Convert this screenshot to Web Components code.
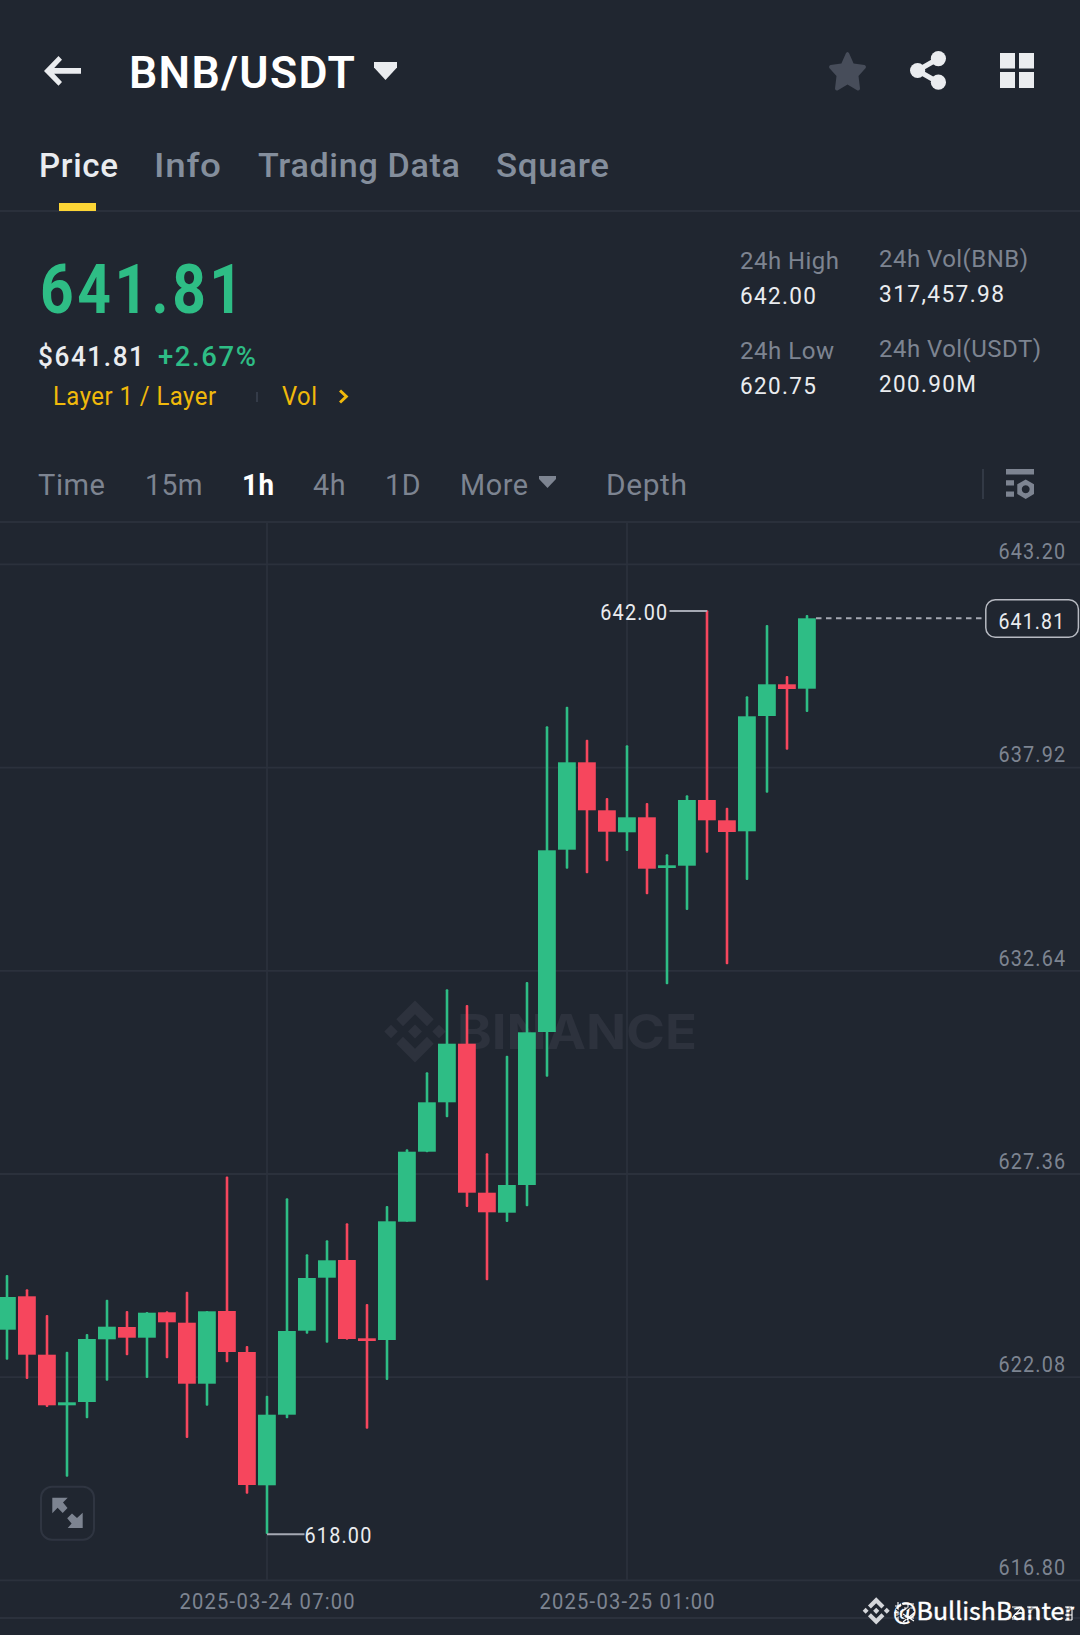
<!DOCTYPE html>
<html lang="en">
<head>
<meta charset="utf-8">
<title>BNB/USDT</title>
<style>
	body {
		margin: 0;
		background: #202630;
		font-family: Roboto, "Liberation Sans", sans-serif;
		overflow: hidden;
	}
</style>
</head>
<body>
<trade-page></trade-page>
<script>
// Text squeezed or stretched to a given width
class FitText extends HTMLElement {
	constructor() {
		super();
		this.attachShadow({ mode: 'open' });
		this.shadowRoot.innerHTML = `
			<style>
			:host {
				display: block;
				flex: none;
				white-space: nowrap;
			}

			span {
				display: inline-block;
				transform-origin: 0 50%;
			}
			</style>
			<span><slot></slot></span>
			`;
	}

	connectedCallback() {
		const width = Number(this.getAttribute('w'));
		const span = this.shadowRoot.querySelector('span');
		this.style.width = width + 'px';
		const natural = span.getBoundingClientRect().width;
		// the last letter's spacing hangs out of the box
		const spacing = parseFloat(getComputedStyle(this).letterSpacing) || 0;
		if (natural > 0) {
			span.style.transform = `scaleX(${width / (natural - spacing)})`;
		}
	}
}

class PairHeader extends HTMLElement {
	constructor() {
		super();
		this.attachShadow({ mode: 'open' });
		this.shadowRoot.innerHTML = `
			<style>
			:host {
				display: flex;
				align-items: center;
				height: 142px;
				padding: 0 46px 0 44px;
				box-sizing: border-box;
				color: #eaecef;
			}

			svg {
				display: block;
				flex: none;
				fill: currentColor;
			}

			fit-text {
				margin: 3px 19px 0 48px;
				font-size: 44px;
				font-weight: 600;
				line-height: 50px;
				letter-spacing: 0.03em;
				color: #fff;
			}

			.actions {
				display: flex;
				align-items: center;
				margin-left: auto;
			}

			.star {
				color: #474d5a;
				margin-right: 44px;
			}

			.share {
				margin: -1px 54px 0 0;
			}

			.apps {
				margin-top: -1px;
			}
			</style>
			<svg width="37" height="30" viewBox="0 0 37 30"><path d="M14.5 0l3.5 3.8L10.2 12H37v5.8H10.2L18 26l-3.5 3.8L0 15z"/></svg>
			<fit-text w="226">BNB/USDT</fit-text>
			<svg width="23" height="18" viewBox="0 0 23 18"><path d="M0 0h23v5.5L11.5 18 0 5.5z"/></svg>
			<div class="actions">
				<svg class="star" width="37" height="39" viewBox="0 0 37 39"><path d="M18.5 0Q19.6 0 20.2 1.5L24.6 11.5 35.5 13Q37.5 13.7 36.7 16L29.5 24 31 36.5Q30.8 39 28.5 38.4L18.5 32.5 8.5 38.4Q6.2 39 6 36.5L7.5 24 .3 16Q-.5 13.7 1.5 13L12.4 11.5 16.8 1.5Q17.4 0 18.5 0z"/></svg>
				<svg class="share" width="36" height="39" viewBox="0 0 36 39"><path d="M28.5 7.5L7.5 19.5l21 12" fill="none" stroke="currentColor" stroke-width="5"/><circle cx="7.6" cy="19.5" r="7.6"/><circle cx="28.4" cy="7.6" r="7.6"/><circle cx="28.4" cy="31.2" r="7.6"/></svg>
				<svg class="apps" width="34" height="35" viewBox="0 0 34 35"><path d="M0 0h15v15.6H0zM19 0h15v15.6H19zM0 19h15v16H0zM19 19h15v16H19z"/></svg>
			</div>
			`;
	}
}

class PageTabs extends HTMLElement {
	constructor() {
		super();
		this.attachShadow({ mode: 'open' });
		this.shadowRoot.innerHTML = `
			<style>
			:host {
				display: flex;
				gap: 36.5px;
				height: 70px;
				padding-left: 38.5px;
				box-sizing: border-box;
				border-bottom: 2px solid #2a303b;
				font-size: 32.3px;
				font-weight: 500;
				line-height: 49px;
				letter-spacing: 0.02em;
				color: #848e9c;
			}

			.active {
				position: relative;
				color: #eaecef;
			}

			.active::after {
				content: '';
				position: absolute;
				left: 20.5px;
				top: 61px;
				width: 37px;
				height: 8px;
				background: #fcd535;
			}
			</style>
			<fit-text class="active" w="79">Price</fit-text>
			<fit-text w="67">Info</fit-text>
			<fit-text w="202">Trading Data</fit-text>
			<fit-text w="113">Square</fit-text>
			`;
	}
}

class StatItem extends HTMLElement {
	constructor() {
		super();
		this.attachShadow({ mode: 'open' });
		this.shadowRoot.innerHTML = `
			<style>
			:host {
				display: block;
				font-size: 24.5px;
				line-height: 34.4px;
				letter-spacing: 0.06em;
				color: #eaecef;
			}

			::slotted([slot="label"]) {
				letter-spacing: 0.02em;
				margin: -1px 0 1px;
				color: #7d8491;
			}
			</style>
			<slot name="label"></slot>
			<slot></slot>
			`;
	}
}

class PriceSummary extends HTMLElement {
	constructor() {
		super();
		this.attachShadow({ mode: 'open' });
		this.shadowRoot.innerHTML = `
			<style>
			:host {
				display: flex;
				height: 238px;
				padding-left: 38px;
				box-sizing: border-box;
			}

			.left {
				width: 702px;
				padding-top: 38px;
			}

			.price {
				margin-left: 1.5px;
				font-size: 69px;
				font-weight: 700;
				line-height: 80px;
				letter-spacing: 0.06em;
				color: #2ebd85;
			}

			.change {
				display: flex;
				gap: 14px;
				font-size: 28.3px;
				font-weight: 500;
				line-height: 54px;
				letter-spacing: 0.06em;
				color: #eaecef;
			}

			.up {
				color: #2ebd85;
			}

			.tags {
				display: flex;
				align-items: center;
				padding-left: 15px;
				font-size: 25px;
				line-height: 25px;
				letter-spacing: 0.02em;
				color: #f0b90b;
			}

			.bar {
				width: 2px;
				height: 10px;
				margin: 0 24px 0 40px;
				background: #343b48;
			}

			.tags svg {
				margin-left: 22px;
			}

			.col {
				display: flex;
				flex-direction: column;
				gap: 21px;
				width: 139px;
				padding-top: 33px;
			}

			.col + .col {
				padding-top: 31px;
			}
			</style>
			<div class="left">
				<fit-text class="price" w="203">641.81</fit-text>
				<div class="change">
					<fit-text w="106">$641.81</fit-text>
					<fit-text class="up" w="98">+2.67%</fit-text>
				</div>
				<div class="tags">
					<fit-text w="163">Layer 1 / Layer</fit-text>
					<div class="bar"></div>
					<fit-text w="35">Vol</fit-text>
					<svg width="10" height="15" viewBox="0 0 10 15" fill="none" stroke="currentColor" stroke-width="3"><path d="M1 1.5l6.3 6L1 13.5"/></svg>
				</div>
			</div>
			<div class="col">
				<stat-item><fit-text slot="label" w="99">24h High</fit-text><fit-text w="76">642.00</fit-text></stat-item>
				<stat-item><fit-text slot="label" w="94">24h Low</fit-text><fit-text w="76">620.75</fit-text></stat-item>
			</div>
			<div class="col">
				<stat-item><fit-text slot="label" w="149">24h Vol(BNB)</fit-text><fit-text w="125">317,457.98</fit-text></stat-item>
				<stat-item><fit-text slot="label" w="162">24h Vol(USDT)</fit-text><fit-text w="97">200.90M</fit-text></stat-item>
			</div>
			`;
	}
}

class IntervalBar extends HTMLElement {
	constructor() {
		super();
		this.attachShadow({ mode: 'open' });
		this.shadowRoot.innerHTML = `
			<style>
			:host {
				display: flex;
				align-items: center;
				height: 73px;
				padding: 0 46px 0 38px;
				box-sizing: border-box;
				border-bottom: 2px solid #2a303b;
				font-size: 29px;
				line-height: 71px;
				letter-spacing: 0.02em;
				color: #7d8491;
			}

			.active {
				font-weight: 700;
				color: #fff;
			}

			fit-text {
				margin: 0 39.5px 0 0;
			}

			.more {
				margin-right: 11px;
			}

			.caret {
				margin: -7px 50px 0 0;
			}

			.bar {
				width: 2px;
				height: 30px;
				margin: -4px 22px 0 auto;
				background: #323945;
			}

			.settings {
				margin-top: -4px;
			}
			</style>
			<fit-text w="67">Time</fit-text>
			<fit-text w="57.5">15m</fit-text>
			<fit-text class="active" w="32">1h</fit-text>
			<fit-text w="32.5">4h</fit-text>
			<fit-text w="35.5">1D</fit-text>
			<fit-text class="more" w="68">More</fit-text>
			<svg class="caret" width="17" height="12" viewBox="0 0 17 12"><path d="M0 0h17v3L8.5 12 0 3z" fill="#7d8491"/></svg>
			<fit-text w="81">Depth</fit-text>
			<div class="bar"></div>
			<svg class="settings" width="28" height="30" viewBox="0 0 28 30" fill="#7d8491">
				<path d="M0 0h28v5.5H0zM0 11.3h8v5.2H0zM0 22.6h8v5.2H0z"/>
				<path fill-rule="evenodd" d="M19.7 10.4l8.3 4.9v9.8l-8.3 4.9-8.4-4.9v-9.8zM19.7 16.2a4 4 0 1 0 .01 0z"/>
			</svg>
			`;
	}
}

const GREEN = '#2ebd85';
const RED = '#f6465d';

// colour, high, body top, body bottom, low (y on the canvas)
const CANDLES = [
	['g', 1275, 1297, 1329.7, 1359.7],
	['r', 1289.3, 1296.3, 1354.7, 1379],
	['r', 1315, 1354.7, 1405.3, 1407],
	['g', 1351.7, 1402.3, 1405.3, 1476.7],
	['g', 1334, 1339, 1402, 1418.3],
	['g', 1299.7, 1326.7, 1339.3, 1380.7],
	['r', 1311, 1327, 1337.7, 1355.3],
	['g', 1312, 1312.7, 1337.7, 1378],
	['r', 1311.3, 1312.3, 1322.3, 1358.3],
	['r', 1291.7, 1322.7, 1383.7, 1438],
	['g', 1311, 1311.3, 1383.7, 1405.7],
	['r', 1176.5, 1311, 1352, 1362.3],
	['r', 1346, 1352, 1485, 1493.7],
	['g', 1395.7, 1414.7, 1485.3, 1534],
	['g', 1198.3, 1331, 1414.7, 1418.3],
	['g', 1254.3, 1278, 1330.7, 1333.7],
	['g', 1240.3, 1260.3, 1277.7, 1342.7],
	['r', 1223.3, 1260, 1339, 1339.7],
	['r', 1304, 1338.3, 1341, 1428.7],
	['g', 1206, 1221.3, 1340, 1380],
	['g', 1149.3, 1151.7, 1221.7, 1221.7],
	['g', 1072.3, 1102.3, 1151.7, 1152.3],
	['g', 989.3, 1043.7, 1102.3, 1117.3],
	['r', 1005, 1043.7, 1192.7, 1207],
	['r', 1153.3, 1192.7, 1212.3, 1280.3],
	['g', 1055.7, 1185, 1212.7, 1222],
	['g', 982, 1032.3, 1185, 1206.3],
	['g', 726.3, 850.3, 1032, 1076.7],
	['g', 706.7, 762.3, 849.7, 868.7],
	['r', 739.7, 762.3, 810.3, 873.3],
	['r', 798, 810.3, 831.7, 861.3],
	['g', 745.3, 817.3, 832.3, 851],
	['r', 803, 817.3, 868.7, 894.3],
	['g', 854.3, 865.3, 868, 984.3],
	['g', 795.3, 800, 865.7, 910],
	['r', 610.3, 800, 820.3, 852.7],
	['r', 807.7, 820.3, 832, 964.3],
	['g', 696.3, 716.3, 831.3, 880],
	['g', 625, 684.3, 716, 792.7],
	['r', 676, 684.3, 689, 749.7],
	['g', 615, 618.3, 688.7, 712],
];

const LEVELS = ['643.20', '637.92', '632.64', '627.36', '622.08', '616.80'];

class CandleChart extends HTMLElement {
	constructor() {
		super();
		this.attachShadow({ mode: 'open' });

		const candles = CANDLES.map(([c, high, top, bottom, low], i) => {
			const x = 7 + i * 20;
			const fill = c === 'g' ? GREEN : RED;
			return `<g fill="${fill}"><rect x="${x - 1.3}" y="${high}" width="2.6" height="${low - high}" rx="1"/><rect x="${x - 9}" y="${top}" width="17.8" height="${bottom - top}"/></g>`;
		}).join('');

		const rows = LEVELS.map((price, i) => {
			const y = 564.4 + i * 203.2;
			return `<path class="grid" d="M0 ${y}H1080"/><text class="axis" x="998.4" y="${y - 5.3}" textLength="68">${price}</text>`;
		}).join('');

		this.shadowRoot.innerHTML = `
			<style>
			:host {
				display: block;
				height: 1112px;
			}

			svg {
				display: block;
			}

			.grid {
				stroke: #2b313c;
				stroke-width: 1.8;
			}

			text {
				font-size: 22.8px;
				letter-spacing: 0.06em;
				fill: #eaecef;
			}

			text.axis {
				fill: #7d8491;
			}

			text.logo {
				font: 700 48px Inter, sans-serif;
				letter-spacing: 0;
				fill: #2d323d;
			}

			text.user {
				font: 400 24px "Noto Sans CJK SC", "Noto Sans", sans-serif;
				letter-spacing: 0;
				fill: #fff;
				stroke: #fff;
				stroke-width: 0.4;
			}

			.lead {
				stroke: #a5a9b3;
				stroke-width: 1.9;
			}

			.noise {
				fill: none;
				stroke: #fff;
				stroke-width: 1.1;
			}

			.noise.dark {
				stroke: #202630;
			}
			</style>
			<svg width="1080" height="1112" viewBox="0 523 1080 1112">
				<defs>
					<g id="mark">
						<path d="M0-31L18.7-12.3 12-5.3 0-17.3-12-5.3-18.7-12.3zM0 31L18.7 12.3 12 5.3 0 17.3-12 5.3-18.7 12.3z"/>
						<path d="M0-7l7 7-7 7-7-7zM-24-6.8L-17.3 0-24 6.8-30.7 0zM24-6.8L30.7 0 24 6.8 17.3 0z"/>
					</g>
				</defs>
				<path class="grid" d="M267 523V1580M627 523V1580M0 1618H1080"/>
				${rows}
				<use href="#mark" transform="translate(415 1031.5)" fill="#2d323d"/>
				<text class="logo" x="457" y="1048.7" textLength="240">BINANCE</text>
				${candles}
				<path class="lead" d="M669.5 611H707M267 1534.3H304.5"/>
				<text x="600.3" y="619.5" textLength="68">642.00</text>
				<text x="304.5" y="1543.2" textLength="68">618.00</text>
				<path class="lead" d="M816 618.3H982" stroke-dasharray="5.5 4.5"/>
				<rect x="985.8" y="599.7" width="92.6" height="37.6" rx="9.5" fill="#202630" stroke="#b7bac2" stroke-width="1.5"/>
				<text x="998.4" y="629.4" textLength="67">641.81</text>
				<text class="axis" x="179.4" y="1608.5" textLength="176.5">2025-03-24 07:00</text>
				<text class="axis" x="539.4" y="1608.5" textLength="176.5">2025-03-25 01:00</text>
				<rect x="41" y="1486.7" width="53" height="53" rx="11" fill="#202630" stroke="#2f3541" stroke-width="2"/>
				<path fill="#7d8491" d="M52.3 1497.7H67.7L63 1502.6 67.5 1508 62.7 1513 57.6 1507.8 52.3 1513.3zM82.7 1528H67.7L71.6 1523.6 67.2 1518.2 72 1513.4 77 1518 82.7 1512.7z"/>
				<use href="#mark" transform="translate(876.2 1610.8) scale(.44)" fill="#d4d6da"/>
				<text class="user" x="893" y="1619.8" textLength="181">@BullishBanter</text>
				<path class="noise" d="M895 1606h6M898 1602v19M894 1613l8-2M903 1604h11M904 1608h10M908 1603v19M903 1614l11 7M914 1613l-11 9M905 1618h9"/>
				<path class="noise dark" d="M896 1609l4 3M901 1603l3 6M905 1611l6-5M902 1616l5 3M910 1609l4 3M896 1617l4-2M1013 1610h8M1019 1609l3 3M1014 1615l7 2M1028 1609h8M1034 1609v8M1027 1614h8M1065 1609h6M1066 1613h6M1065 1617h6"/>
				<path class="noise" d="M1012 1607h10M1022 1607l-10 11M1012 1619h11M1027 1607h11M1037 1607v12M1030 1611v8M1065 1607h7M1072 1607v13M1065 1615h7M1065 1620h7"/>
			</svg>
			`;

		this.shadowRoot.querySelectorAll('text[textLength]').forEach((t) => {
			t.setAttribute('lengthAdjust', 'spacingAndGlyphs');
		});
	}
}

class TradePage extends HTMLElement {
	constructor() {
		super();
		this.attachShadow({ mode: 'open' });
		this.shadowRoot.innerHTML = `
			<style>
			:host {
				display: flex;
				flex-direction: column;
				width: 1080px;
				height: 1635px;
				overflow: hidden;
			}
			</style>
			<pair-header></pair-header>
			<page-tabs></page-tabs>
			<price-summary></price-summary>
			<interval-bar></interval-bar>
			<candle-chart></candle-chart>
			`;
	}
}

customElements.define('stat-item', StatItem);
customElements.define('pair-header', PairHeader);
customElements.define('page-tabs', PageTabs);
customElements.define('price-summary', PriceSummary);
customElements.define('interval-bar', IntervalBar);
customElements.define('candle-chart', CandleChart);
customElements.define('trade-page', TradePage);
// Last, so that every text is already laid out when it is measured
customElements.define('fit-text', FitText);
</script>
</body>
</html>
